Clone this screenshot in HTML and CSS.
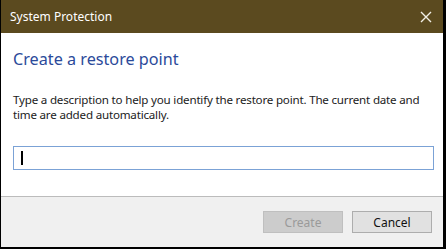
FILE: index.html
```html
<!DOCTYPE html>
<html lang="en">
<head>
    <meta charset="UTF-8">
    <title>System Protection</title>
    <link rel="stylesheet" href="styles.css">
</head>
<body>

    <!-- Dialog window -->
    <div class="window">

        <!-- Title bar -->
        <div class="titlebar">
            <span class="title">System Protection</span>
            <svg class="close" width="12" height="12" viewBox="0 0 12 12">
                <path d="M1 1 L11 11 M11 1 L1 11" stroke="#f2efe6" stroke-width="1.4" fill="none"/>
            </svg>
        </div>

        <!-- Main content -->
        <div class="content">
            <h1>Create a restore point</h1>
            <p>Type a description to help you identify the restore point. The current date and time are added automatically.</p>
            <div class="field"><span class="caret"></span></div>
        </div>

        <!-- Buttons -->
        <div class="footer">
            <button class="btn disabled">Create</button>
            <button class="btn">Cancel</button>
        </div>
    </div>

</body>
</html>
```

FILE: styles.css
```css
body {
    margin: 0;
    background: #000;
    font-family: "Noto Sans", "Open Sans", sans-serif;
    height: 249px;
    overflow: hidden;
}

.window {
    margin: 0 3px 0 1px;
    height: 247px;
    background: #fff;
    display: flex;
    flex-direction: column;
}

/* Title bar */
.titlebar {
    height: 33px;
    background: #5b4a1f;
    color: #fff;
    display: flex;
    align-items: center;
    justify-content: space-between;
    padding: 0 11px 0 9px;
    flex-shrink: 0;
}

.title {
    font-size: 12px;
    margin-top: -1px;
}

/* Content */
.content {
    flex: 1;
    padding: 15px 8px 0 12px;
}

h1 {
    margin: 0;
    font-size: 16.2px;
    font-weight: normal;
    color: #2b4a9a;
    line-height: 22px;
}

p {
    margin: 22px 0 0 0;
    font-size: 11.6px;
    letter-spacing: -0.2px;
    line-height: 15px;
    color: #222;
}

.field {
    margin-top: 24px;
    width: 412px;
    height: 22px;
    border: 1px solid #7ba2d6;
    display: flex;
    align-items: center;
    padding-left: 7px;
    box-sizing: content-box;
}

.caret {
    width: 2px;
    height: 14px;
    background: #000;
}

/* Footer with buttons */
.footer {
    height: 51px;
    background: #f0f0f0;
    border-top: 1px solid #bcbcbc;
    display: flex;
    justify-content: flex-end;
    align-items: flex-start;
    gap: 9px;
    padding: 14px 11px 0 0;
    box-sizing: border-box;
    flex-shrink: 0;
}

.btn {
    width: 80px;
    height: 22px;
    font-family: inherit;
    font-size: 12px;
    background: #e1e1e1;
    border: 1px solid #adadad;
    color: #111;
    padding: 0;
}

.btn.disabled {
    background: #cccccc;
    border-color: #bfbfbf;
    color: #9a9a9a;
}
```
